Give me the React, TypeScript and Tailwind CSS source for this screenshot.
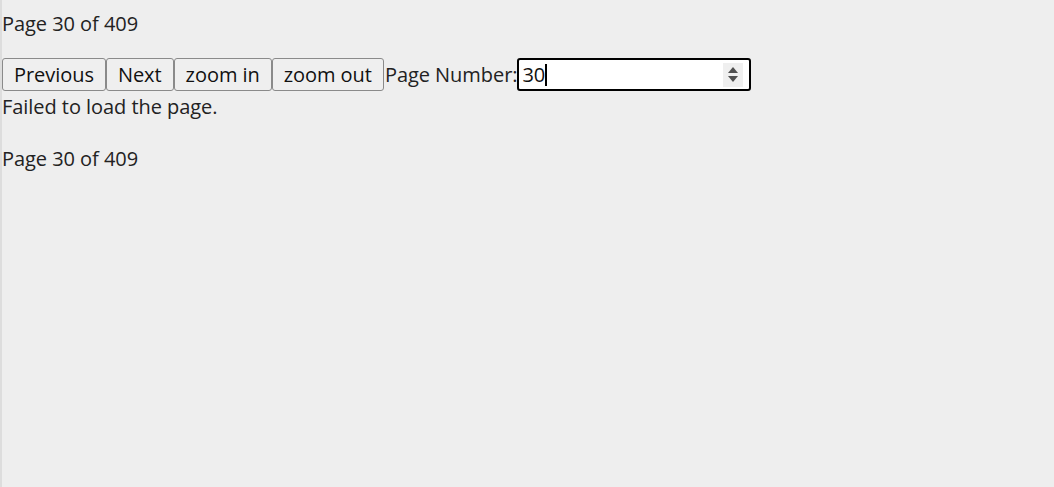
import React from 'react';

const btn =
  'h-[33px] px-[11px] border border-[#8a8a8a] rounded-[3px] bg-[#efefef] text-[#111] leading-none';

export default function App() {
  return (
    <div className="min-h-[487px] bg-[#eeeeee] border-l-2 border-[#dddddd] text-[20px] text-[#222] font-['Open_Sans',sans-serif] tracking-[-0.05px]">
      <p className="pt-[10px] leading-[28px]">Page 30 of 409</p>
      <div className="mt-[20px] flex items-center h-[33px]">
        <button className={btn}>Previous</button>
        <button className={btn}>Next</button>
        <button className={btn}>zoom in</button>
        <button className={btn}>zoom out</button>
        <span className="ml-px">Page Number:</span>
        <div className="flex items-center w-[234px] h-[33px] border-2 border-black rounded-[3px] bg-white pl-[3px] pr-[6px]">
          <span className="text-[#111]">30</span>
          <span className="w-[2px] h-[22px] bg-black" />
          <span className="ml-auto w-[20px] h-[24px] bg-[#efefef] flex flex-col items-center justify-center gap-[3px]">
            <span className="w-0 h-0 border-l-[5px] border-r-[5px] border-b-[6px] border-l-transparent border-r-transparent border-b-[#505050]" />
            <span className="w-0 h-0 border-l-[5px] border-r-[5px] border-t-[6px] border-l-transparent border-r-transparent border-t-[#505050]" />
          </span>
        </div>
      </div>
      <p className="leading-[28px] mt-[2px]">Failed to load the page.</p>
      <p className="leading-[28px] mt-[24px]">Page 30 of 409</p>
    </div>
  );
}
